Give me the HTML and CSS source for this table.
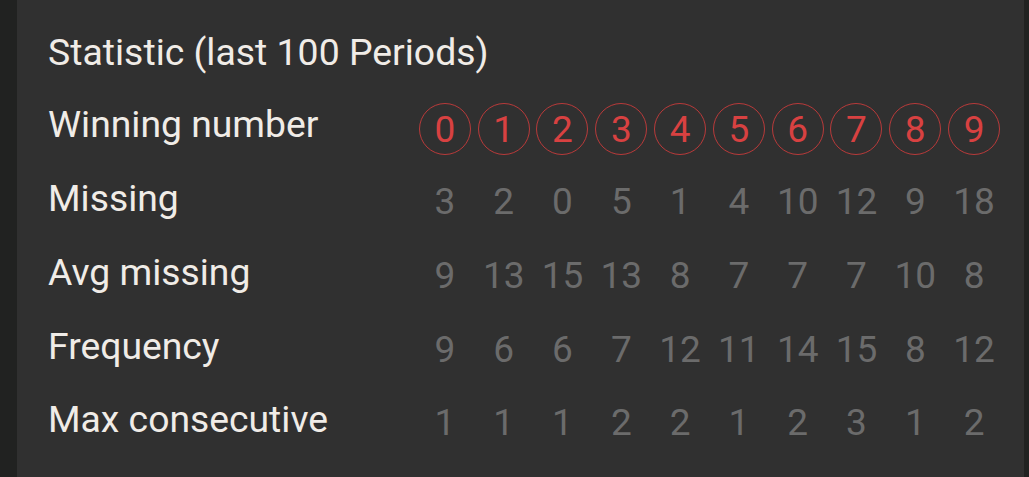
FILE: index.html
```html
<!DOCTYPE html>
<html>
<head>
<meta charset="utf-8">
<link rel="stylesheet" href="styles.css">
</head>
<body>
<div class="page">
  <div class="panel">
    <div class="title">Statistic (last 100 Periods)</div>
    <div class="table">
      <div class="label">Winning number</div>
      <div class="cell"><span class="ball">0</span></div>
      <div class="cell"><span class="ball">1</span></div>
      <div class="cell"><span class="ball">2</span></div>
      <div class="cell"><span class="ball">3</span></div>
      <div class="cell"><span class="ball">4</span></div>
      <div class="cell"><span class="ball">5</span></div>
      <div class="cell"><span class="ball">6</span></div>
      <div class="cell"><span class="ball">7</span></div>
      <div class="cell"><span class="ball">8</span></div>
      <div class="cell"><span class="ball">9</span></div>

      <div class="label">Missing</div>
      <div class="cell num">3</div><div class="cell num">2</div><div class="cell num">0</div><div class="cell num">5</div><div class="cell num">1</div>
      <div class="cell num">4</div><div class="cell num">10</div><div class="cell num">12</div><div class="cell num">9</div><div class="cell num">18</div>

      <div class="label">Avg missing</div>
      <div class="cell num">9</div><div class="cell num">13</div><div class="cell num">15</div><div class="cell num">13</div><div class="cell num">8</div>
      <div class="cell num">7</div><div class="cell num">7</div><div class="cell num">7</div><div class="cell num">10</div><div class="cell num">8</div>

      <div class="label">Frequency</div>
      <div class="cell num">9</div><div class="cell num">6</div><div class="cell num">6</div><div class="cell num">7</div><div class="cell num">12</div>
      <div class="cell num">11</div><div class="cell num">14</div><div class="cell num">15</div><div class="cell num">8</div><div class="cell num">12</div>

      <div class="label">Max consecutive</div>
      <div class="cell num">1</div><div class="cell num">1</div><div class="cell num">1</div><div class="cell num">2</div><div class="cell num">2</div>
      <div class="cell num">1</div><div class="cell num">2</div><div class="cell num">3</div><div class="cell num">1</div><div class="cell num">2</div>
    </div>
  </div>
</div>
</body>
</html>
```
FILE: styles.css
```css
html, body {
  margin: 0;
  padding: 0;
  background: #212221;
  height: 100%;
  overflow: hidden;
}
.page {
  display: flex;
  height: 477px;
  padding-left: 17px;
}
.panel {
  width: 1007px;
  background: #303030;
  padding: 16px 0 0 31px;
  box-sizing: border-box;
  font-family: Roboto, "Noto Sans", sans-serif;
  font-size: 37px;
  color: #f0ece7;
}
.title {
  height: 71.5px;
  display: flex;
  align-items: center;
  font-size: 37.4px;
}
.table {
  display: grid;
  grid-template-columns: 367.5px repeat(10, 58.8px);
  grid-auto-rows: 73.75px;
}
.label {
  display: flex;
  align-items: center;
  font-size: 37.3px;
}
.cell {
  display: flex;
  align-items: center;
  justify-content: center;
}
.num {
  color: #6b6b6b;
  padding-top: 7px;
}
.ball {
  width: 50px;
  height: 50px;
  margin-top: 10px;
  border: 1px solid #b83a3a;
  border-radius: 50%;
  display: flex;
  align-items: center;
  justify-content: center;
  color: #d84141;
}
```
